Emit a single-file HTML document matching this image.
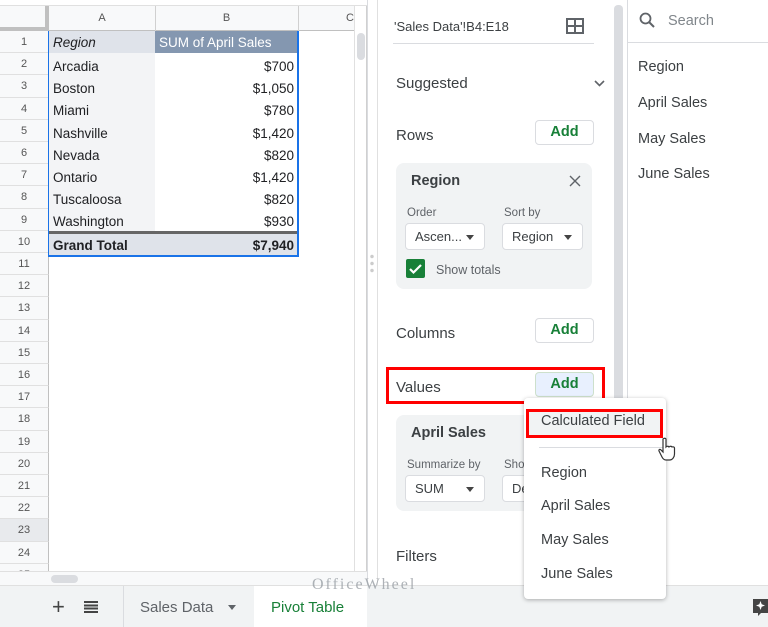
<!DOCTYPE html><html><head><style>
*{margin:0;padding:0;box-sizing:border-box}
body{width:768px;height:627px;overflow:hidden;background:#fff;font-family:"Liberation Sans",Arial,sans-serif;position:relative;color:#202124}
.a{position:absolute}
.rh{position:absolute;left:0;width:49px;background:#f8f9fa;border-bottom:1px solid #e0e0e0;border-right:1px solid #c0c0c0;color:#555;font-size:11px;text-align:center}
.cell{position:absolute;font-size:13.5px;white-space:nowrap}
.pt{font-size:15px;color:#3c4043}
.btn{position:absolute;width:59px;height:25px;border:1px solid #dadce0;border-radius:4px;color:#188038;font-size:14.5px;font-weight:bold;text-align:center;line-height:23px;background:#fff}
.sel{position:absolute;height:27px;background:#fff;border:1px solid #dadce0;border-radius:4px;font-size:13px;color:#3c4043;line-height:25px;padding-left:9px}
.sel:after{content:"";position:absolute;right:10px;top:11px;border:4px solid transparent;border-top:5px solid #444}
.lbl{position:absolute;font-size:11.5px;color:#5f6368}
.fl{position:absolute;left:638px;font-size:14.5px;color:#3c4043}
.mi{position:absolute;left:541px;font-size:14.5px;color:#3c4043}
</style></head><body>
<div class="a" style="left:0;top:0;width:367px;height:6px;background:#fff;border-bottom:1px solid #e0e0e0"></div>
<div class="a" style="left:0;top:6px;width:49px;height:25px;background:#f8f9fa;border-right:4px solid #c0c0c0;border-bottom:4px solid #c0c0c0"></div>
<div class="a" style="left:49px;top:6px;width:305px;height:25px;background:#f8f9fa;border-bottom:1px solid #c0c0c0"></div>
<div class="a" style="left:49px;top:12px;width:106px;text-align:center;font-size:11px;color:#555">A</div>
<div class="a" style="left:155px;top:6px;width:1px;height:25px;background:#d0d0d0"></div>
<div class="a" style="left:155px;top:12px;width:143px;text-align:center;font-size:11px;color:#555">B</div>
<div class="a" style="left:298px;top:6px;width:1px;height:25px;background:#d0d0d0"></div>
<div class="a" style="left:346px;top:12px;font-size:11px;color:#555">C</div>
<div id="rows"></div>
<script>
var h='';for(var n=1;n<=25;n++){var t=31+(n-1)*22.2;h+='<div class="rh" style="top:'+t+'px;height:22.2px;line-height:23px'+(n==23?';background:#e8eaed':'')+'">'+n+'</div>';}
document.getElementById('rows').innerHTML=h;
</script>
<div class="a" style="left:49px;top:31px;width:106px;height:22px;background:#dfe3ea"></div>
<div class="a" style="left:155px;top:31px;width:143px;height:22px;background:#8497b0"></div>
<div class="a" style="left:49px;top:53px;width:106px;height:178px;background:#f3f4f6"></div>
<div class="a" style="left:49px;top:231px;width:249px;height:3px;background:#666"></div>
<div class="a" style="left:49px;top:234px;width:249px;height:22px;background:#dfe3ea"></div>
<div class="a" style="left:48px;top:31px;width:251px;height:226px;border:2px solid #1a73e8;border-top:0;border-left:1px solid #1a73e8"></div>
<div class="cell" style="left:53px;top:35px;font-style:italic">Region</div>
<div class="cell" style="left:159px;top:35px;color:#fff">SUM of April Sales</div>
<div id="d"></div>
<script>
var r=[["Arcadia","$700"],["Boston","$1,050"],["Miami","$780"],["Nashville","$1,420"],["Nevada","$820"],["Ontario","$1,420"],["Tuscaloosa","$820"],["Washington","$930"]];var s='';
r.forEach(function(x,i){var t=59+i*22.2;s+='<div class="cell" style="left:53px;top:'+t+'px">'+x[0]+'</div><div class="cell" style="left:200px;width:94px;text-align:right;top:'+t+'px">'+x[1]+'</div>';});
document.getElementById('d').innerHTML=s;
</script>
<div class="cell" style="left:53px;top:238px;font-weight:bold">Grand Total</div>
<div class="cell" style="left:200px;width:94px;text-align:right;top:238px;font-weight:bold">$7,940</div>
<div class="a" style="left:354px;top:6px;width:13px;height:565px;background:#fff;border-left:1px solid #e0e0e0;border-right:1px solid #d0d0d0"></div>
<div class="a" style="left:357px;top:33px;width:8px;height:27px;background:#dadce0;border-radius:4px"></div>
<div class="a" style="left:0;top:571px;width:367px;height:14px;background:#f8f9fa;border-top:1px solid #e0e0e0"></div>
<div class="a" style="left:51px;top:575px;width:27px;height:8px;background:#dadce0;border-radius:4px"></div>
<div class="a" style="left:367px;top:0;width:1px;height:585px;background:#dadce0"></div>
<div class="a" style="left:370px;top:253px;width:4px;height:22px;background:radial-gradient(circle,#ccc 1.5px,transparent 2px) 0 0/4px 7px"></div>
<div class="a" style="left:377px;top:0;width:1px;height:585px;background:#e0e0e0"></div>
<div class="a" style="left:394px;top:19px;font-size:13px;color:#3c4043">'Sales Data'!B4:E18</div>
<svg class="a" style="left:566px;top:18px" width="18" height="16"><rect x="1" y="1" width="16" height="14" fill="none" stroke="#5f6368" stroke-width="2"/><path d="M9 1v14M1 8h16" stroke="#5f6368" stroke-width="2"/></svg>
<div class="a" style="left:393px;top:43px;width:201px;height:1px;background:#dadce0"></div>
<div class="a pt" style="left:396px;top:75px">Suggested</div>
<svg class="a" style="left:594px;top:80px" width="11" height="8"><path d="M1 1l4.5 4.5L10 1" fill="none" stroke="#5f6368" stroke-width="1.6"/></svg>
<div class="a pt" style="left:396px;top:127px">Rows</div>
<div class="btn" style="left:535px;top:120px">Add</div>
<div class="a" style="left:396px;top:163px;width:196px;height:126px;background:#f1f3f4;border-radius:8px"></div>
<div class="a" style="left:411px;top:173px;font-size:14.5px;color:#3c4043;font-weight:bold">Region</div>
<svg class="a" style="left:569px;top:175px" width="12" height="12"><path d="M1 1l10 10M11 1L1 11" stroke="#5f6368" stroke-width="1.4"/></svg>
<div class="lbl" style="left:407px;top:207px">Order</div>
<div class="lbl" style="left:504px;top:207px">Sort by</div>
<div class="sel" style="left:405px;top:223px;width:80px">Ascen...</div>
<div class="sel" style="left:502px;top:223px;width:81px">Region</div>
<div class="a" style="left:406px;top:259px;width:19px;height:19px;background:#188038;border-radius:2px"></div>
<svg class="a" style="left:406px;top:259px" width="19" height="19"><path d="M4 10l3.5 3.5L15 6" fill="none" stroke="#fff" stroke-width="2.2"/></svg>
<div class="a" style="left:436px;top:263px;font-size:12.5px;color:#5f6368">Show totals</div>
<div class="a pt" style="left:396px;top:325px">Columns</div>
<div class="btn" style="left:535px;top:318px">Add</div>
<div class="a" style="left:386px;top:367px;width:219px;height:37px;border:3px solid #f00"></div>
<div class="a pt" style="left:396px;top:379px">Values</div>
<div class="btn" style="left:535px;top:372px;background:#e8f0fe;border-color:#cde0cc">Add</div>
<div class="a" style="left:396px;top:415px;width:140px;height:96px;background:#f1f3f4;border-radius:8px"></div>
<div class="a" style="left:411px;top:425px;font-size:14.5px;color:#3c4043;font-weight:bold">April Sales</div>
<div class="lbl" style="left:407px;top:459px">Summarize by</div>
<div class="lbl" style="left:504px;top:459px">Sho</div>
<div class="sel" style="left:405px;top:475px;width:80px">SUM</div>
<div class="a" style="left:502px;top:475px;width:30px;height:27px;background:#fff;border:1px solid #dadce0;border-radius:4px;font-size:13px;color:#3c4043;line-height:25px;padding-left:9px">De</div>
<div class="a pt" style="left:396px;top:548px">Filters</div>
<div class="a" style="left:614px;top:5px;width:9px;height:400px;background:#dadce0;border-radius:4px"></div>
<div class="a" style="left:627px;top:0;width:1px;height:585px;background:#dadce0"></div>
<svg class="a" style="left:639px;top:12px" width="16" height="16"><circle cx="6.5" cy="6.5" r="5" fill="none" stroke="#5f6368" stroke-width="1.8"/><path d="M10 10l5 5" stroke="#5f6368" stroke-width="2"/></svg>
<div class="a" style="left:668px;top:13px;font-size:14.5px;color:#80868b">Search</div>
<div class="a" style="left:628px;top:42px;width:140px;height:1px;background:#dadce0"></div>
<div class="fl" style="top:59px">Region</div>
<div class="fl" style="top:95px">April Sales</div>
<div class="fl" style="top:131px">May Sales</div>
<div class="fl" style="top:166px">June Sales</div>
<div class="a" style="left:0;top:585px;width:768px;height:42px;background:#f1f3f4;border-top:1px solid #e0e0e0"></div>
<div class="a" style="left:52px;top:594px;font-size:22px;color:#444">+</div>
<div class="a" style="left:84px;top:601px;width:14px;height:12px;background:repeating-linear-gradient(#444 0 2px,transparent 2px 3.3px)"></div>
<div class="a" style="left:123px;top:586px;width:1px;height:41px;background:#dadce0"></div>
<div class="a" style="left:140px;top:599px;font-size:15px;color:#5f6368">Sales Data</div>
<div class="a" style="left:228px;top:605px;border:4px solid transparent;border-top:5px solid #5f6368"></div>
<div class="a" style="left:254px;top:586px;width:113px;height:41px;background:#fff"></div>
<div class="a" style="left:271px;top:599px;font-size:15px;color:#188038">Pivot Table</div>
<div class="a" style="left:312px;top:576px;font-family:'Liberation Serif',serif;font-size:16px;letter-spacing:2px;color:#9aa0a6;opacity:.8">OfficeWheel</div>
<svg class="a" style="left:753px;top:597px" width="15" height="20"><path d="M0 2h15v14H8l-3 3v-3H0z" fill="#444"/><path d="M7.5 4l1.2 3.3L12 8.5 8.7 9.7 7.5 13 6.3 9.7 3 8.5l3.3-1.2z" fill="#fff"/></svg>
<div class="a" style="left:524px;top:398px;width:142px;height:201px;background:#fff;border-radius:4px;box-shadow:0 1px 4px rgba(0,0,0,.3)"></div>
<div class="a" style="left:526px;top:409px;width:137px;height:29px;border:3px solid #f00;background:#f1f3f4"></div>
<div class="mi" style="top:413px">Calculated Field</div>
<div class="a" style="left:539px;top:447px;width:125px;height:1px;background:#dadce0"></div>
<div class="mi" style="top:465px">Region</div>
<div class="mi" style="top:498px">April Sales</div>
<div class="mi" style="top:532px">May Sales</div>
<div class="mi" style="top:566px">June Sales</div>
<svg class="a" style="left:657px;top:437px" width="20" height="26"><path d="M6 2c1-1 2.5-1 3 0v8c1-1 2.5-1 3 0 1-1 2.5-1 3 0 1-.5 2.5 0 2.5 1v6c0 3-2 6-5 6H9c-2 0-3-1-4-3L2 14c-.5-1 .5-2 1.5-1.5L6 15z" fill="#fff" stroke="#333" stroke-width="1.2"/></svg>
</body></html>
